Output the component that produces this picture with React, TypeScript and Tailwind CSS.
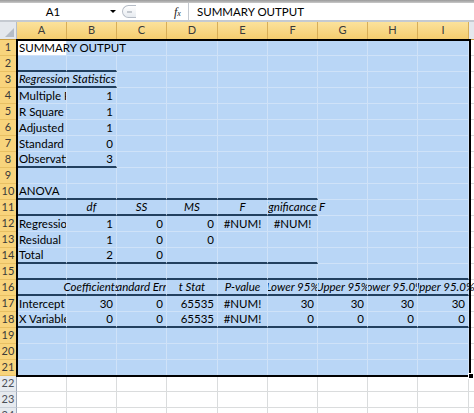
import React from 'react'

type Cell = { t: string; c: string }

const font = { fontFamily: 'Lato, "Liberation Sans", sans-serif' }

const widths = ['w-[50px]', 'w-[50px]', 'w-[50px]', 'w-[51px]', 'w-[50px]', 'w-[50px]', 'w-[50px]', 'w-[50px]', 'w-[51px]']
const letters = ['A', 'B', 'C', 'D', 'E', 'F', 'G', 'H', 'I']

const base = 'h-full flex items-center whitespace-nowrap overflow-hidden'
const L = (t: string): Cell => ({ t, c: 'justify-start pl-[2px]' })
const LS = (t: string, it = false): Cell => ({
  t,
  c: `justify-start pl-[2px] !overflow-visible [clip-path:inset(0_-150px_0_0)] ${it ? 'italic' : ''}`,
})
const R = (t: string): Cell => ({ t, c: 'justify-end pr-[3px]' })
const C = (t: string): Cell => ({ t, c: 'justify-center' })
const CI = (t: string): Cell => ({ t, c: 'justify-center italic' })
const CIL = (t: string): Cell => ({ t, c: 'justify-center italic !overflow-visible [clip-path:inset(0_0_0_-60px)]' })
const CIR = (t: string): Cell => ({ t, c: 'justify-center italic !overflow-visible [clip-path:inset(0_-60px_0_0)]' })

const data: Record<number, Cell[]> = {
  1: [LS('SUMMARY OUTPUT')],
  3: [LS('Regression Statistics', true)],
  4: [L('Multiple R'), R('1')],
  5: [L('R Square'), R('1')],
  6: [L('Adjusted R Square'), R('1')],
  7: [L('Standard Error'), R('0')],
  8: [L('Observations'), R('3')],
  10: [L('ANOVA')],
  11: [L(''), CI('df'), CI('SS'), CI('MS'), CI('F'), CIR('Significance F')],
  12: [L('Regression'), R('1'), R('0'), R('0'), C('#NUM!'), C('#NUM!')],
  13: [L('Residual'), R('1'), R('0'), R('0')],
  14: [L('Total'), R('2'), R('0')],
  16: [L(''), CIL('Coefficients'), CI('Standard Error'), CI('t Stat'), CI('P-value'), CI('Lower 95%'), CI('Upper 95%'), CI('Lower 95.0%'), CIR('Upper 95.0%')],
  17: [L('Intercept'), R('30'), R('0'), R('65535'), C('#NUM!'), R('30'), R('30'), R('30'), R('30')],
  18: [L('X Variable 1'), R('0'), R('0'), R('65535'), C('#NUM!'), R('0'), R('0'), R('0'), R('0')],
}

// rows whose bottom edge carries a table rule, and how many columns it spans
const rules: Record<number, number> = { 2: 2, 3: 2, 8: 2, 10: 6, 11: 6, 14: 6, 15: 9, 16: 9, 18: 9 }

function Row({ n }: { n: number }) {
  const sel = n <= 21
  const cells = data[n] || []
  return (
    <div className="flex h-[16px]">
      <div
        className={`w-[17px] shrink-0 flex items-center justify-center text-[11px] border-r border-b ${
          sel ? 'bg-[#f8d47c] border-r-[#c99d3e] border-b-[#e8c063] text-[#3a3a3a]' : 'bg-[#e6eaef] border-r-[#9eaabb] border-b-[#c9d0d9] text-[#4a4f57]'
        }`}
      >
        {n}
      </div>
      {widths.map((w, i) => {
        const cell = cells[i]
        const rule = rules[n] && i < rules[n]
        const bg = n === 1 && i === 0 ? 'bg-white' : sel ? 'bg-[#b9d6f6]' : 'bg-white'
        const grid = sel ? 'border-[#cfe2f8]' : 'border-[#dadcdd]'
        return (
          <div
            key={i}
            className={`${w} shrink-0 ${bg} border-r border-b ${grid} ${rule ? '!border-b-2 !border-b-[#22405f]' : ''} ${base} ${cell ? cell.c : ''} text-[11.5px] text-black`}
          >
            {cell && <span>{cell.t}</span>}
          </div>
        )
      })}
      <div className="w-[10px] shrink-0 bg-white border-b border-[#dadcdd]" />
    </div>
  )
}

export default function App() {
  const rowsNums = Array.from({ length: 24 }, (_, i) => i + 1)
  return (
    <div className="w-[474px] h-[413px] overflow-hidden relative bg-white select-none" style={font}>
      {/* formula bar */}
      <div className="h-[3px] bg-gradient-to-b from-[#9a9a9a] to-[#c9c9c9]" />
      <div className="flex h-[17px] bg-white items-center text-[11.5px] text-black">
        <div className="w-[106px] flex justify-center">A1</div>
        <div className="w-[13px] flex justify-center">
          <div className="w-0 h-0 border-l-[3px] border-r-[3px] border-t-[3px] border-l-transparent border-r-transparent border-t-black" />
        </div>
        <div className="ml-[3px] w-[14px] h-[13px] rounded-l-full border border-r-0 border-[#b5bcc6] bg-gradient-to-b from-white to-[#e7ebf0] flex items-center justify-center">
          <div className="w-[5px] h-[2px] border-t border-b border-[#c3c8cf]" />
        </div>
        <div className="w-[38px]" />
        <div className="w-[14px] text-[12px] italic text-[#222]" style={{ fontFamily: '"Liberation Serif", serif' }}>
          f<span className="text-[8px]">x</span>
        </div>
        <div className="h-full border-l border-[#c4c9d0] pl-[8px] flex items-center flex-1">SUMMARY OUTPUT</div>
      </div>
      <div className="h-[2px] bg-[#c5cad1]" />
      {/* column headers */}
      <div className="flex h-[18px] border-b border-[#c99d3e]">
        <div className="w-[17px] shrink-0 bg-[#e4e8ed] border-r border-[#b5bdc8] flex items-end justify-end p-[2px]">
          <svg width="9" height="9" viewBox="0 0 9 9">
            <path d="M9 0 L9 9 L0 9 Z" fill="#b4bcc6" />
          </svg>
        </div>
        {widths.map((w, i) => (
          <div
            key={i}
            className={`${w} shrink-0 flex items-center justify-center text-[11px] text-[#3a3a3a] bg-gradient-to-b from-[#fbe29c] to-[#f5cd6e] border-r border-[#d7ae58]`}
          >
            {letters[i]}
          </div>
        ))}
        <div className="w-[10px] shrink-0 bg-[#e4e8ed]" />
      </div>
      {rowsNums.map(n => (
        <Row key={n} n={n} />
      ))}
      {/* selection outline and fill handle */}
      <div className="absolute left-[16px] top-[39px] w-[455px] h-[338px] border-2 border-black pointer-events-none" />
      <div className="absolute left-[468px] top-[373px] w-[6px] h-[6px] bg-black border border-white" />
    </div>
  )
}
